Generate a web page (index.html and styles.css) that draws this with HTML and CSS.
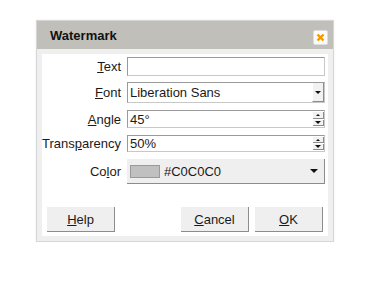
FILE: index.html
```html
<!DOCTYPE html>
<html>
<head>
    <meta charset="UTF-8">
    <title>Watermark</title>
    <link rel="stylesheet" href="styles.css">
</head>
<body>
    <div class="dialog">
        <div class="titlebar">
            <div class="title">Watermark</div>
            <div class="close-btn">
                <svg width="9" height="9" viewBox="0 0 9 9">
                    <path d="M1.5 1.5 L7.5 7.5 M7.5 1.5 L1.5 7.5" stroke="#f49a00" stroke-width="2.4"/>
                </svg>
            </div>
        </div>

        <div class="panel">
            <div class="form">
                <div class="row row-text">
                    <label><u>T</u>ext</label>
                    <div class="field"></div>
                </div>
                <div class="row row-font">
                    <label><u>F</u>ont</label>
                    <div class="field">
                        <span class="value">Liberation Sans</span>
                        <span class="drop-btn"><span class="tri"></span></span>
                    </div>
                </div>
                <div class="row row-angle">
                    <label><u>A</u>ngle</label>
                    <div class="field">
                        <span class="value">45°</span>
                        <span class="spin">
                            <span class="spin-btn"><span class="tri-up"></span></span>
                            <span class="spin-btn"><span class="tri-down"></span></span>
                        </span>
                    </div>
                </div>
                <div class="row row-trans">
                    <label>Trans<u>p</u>arency</label>
                    <div class="field">
                        <span class="value">50%</span>
                        <span class="spin">
                            <span class="spin-btn"><span class="tri-up"></span></span>
                            <span class="spin-btn"><span class="tri-down"></span></span>
                        </span>
                    </div>
                </div>
                <div class="row row-color">
                    <label>Co<u>l</u>or</label>
                    <div class="color-btn">
                        <span class="swatch"></span>
                        <span class="value">#C0C0C0</span>
                        <span class="tri big"></span>
                    </div>
                </div>
            </div>

            <div class="buttons">
                <button><u>H</u>elp</button>
                <div class="spacer"></div>
                <button><u>C</u>ancel</button>
                <button><u>O</u>K</button>
            </div>
        </div>
    </div>
</body>
</html>
```

FILE: styles.css
```css
:root {
    --title-bg: #c1bfba;
    --frame-bg: #efefef;
    --border-color: #a8a8a8;
    --text-color: #1a1a1a;
}

* {
    box-sizing: border-box;
    margin: 0;
    padding: 0;
}

body {
    background: #fff;
    font-family: "Liberation Sans", Arial, sans-serif;
    font-size: 13px;
    color: var(--text-color);
}

.dialog {
    margin: 20px 0 0 36px;
    width: 298px;
    height: 222px;
    background: var(--frame-bg);
    border: 1px solid #d6d6d6;
    box-shadow: 0 0 2px rgba(0,0,0,0.08);
    display: flex;
    flex-direction: column;
}

.titlebar {
    height: 28px;
    background: var(--title-bg);
    display: flex;
    align-items: center;
    justify-content: space-between;
    padding: 0 5px 0 13px;
}

.title {
    font-weight: bold;
    font-size: 13px;
    color: #111;
    padding-top: 1px;
}

.close-btn {
    width: 15px;
    height: 15px;
    margin-top: 5px;
    background: #fbfbfb;
    border: 1px solid #dedede;
    border-radius: 2px;
    display: flex;
    align-items: center;
    justify-content: center;
}

.panel {
    flex: 1;
    margin: 5px 5px 5px 5px;
    background: #fff;
    display: flex;
    flex-direction: column;
}

.form {
    padding: 3px 3px 0 0;
    display: flex;
    flex-direction: column;
}

.row {
    display: flex;
    align-items: center;
}

.row label {
    width: 79px;
    text-align: right;
    padding-right: 6px;
    width: 85px;
}

.row-text { height: 19px; }
.row-font { height: 21px; margin-top: 6px; }
.row-angle { height: 18px; margin-top: 7px; }
.row-trans { height: 17px; margin-top: 7px; }
.row-color { height: 25px; margin-top: 7px; }

.field {
    flex: 1;
    height: 100%;
    background: #fff;
    border: 1px solid #c8c8c8;
    border-top-color: #9a9a9a;
    border-left-color: #9a9a9a;
    display: flex;
    align-items: center;
    padding-left: 2px;
}

.value {
    flex: 1;
}

.drop-btn {
    width: 12px;
    height: 100%;
    background: #f2f2f2;
    border-right: 1px solid #8c8c8c;
    border-bottom: 1px solid #8c8c8c;
    border-left: 1px solid #fff;
    display: flex;
    align-items: center;
    justify-content: center;
    margin-right: 0;
}

.tri {
    width: 0;
    height: 0;
    border-left: 3px solid transparent;
    border-right: 3px solid transparent;
    border-top: 3px solid #111;
}

.tri.big {
    border-left-width: 4px;
    border-right-width: 4px;
    border-top-width: 4px;
    margin-right: 6px;
}

.spin {
    width: 11px;
    height: 100%;
    display: flex;
    flex-direction: column;
    gap: 1px;
    padding: 1px 0;
}

.spin-btn {
    flex: 1;
    background: #f2f2f2;
    border-right: 1px solid #8c8c8c;
    border-bottom: 1px solid #8c8c8c;
    display: flex;
    align-items: center;
    justify-content: center;
}

.tri-up {
    width: 0;
    height: 0;
    border-left: 2px solid transparent;
    border-right: 2px solid transparent;
    border-bottom: 2px solid #111;
}

.tri-down {
    width: 0;
    height: 0;
    border-left: 3px solid transparent;
    border-right: 3px solid transparent;
    border-top: 3px solid #111;
}

.color-btn {
    flex: 1;
    height: 100%;
    background: var(--frame-bg);
    border-right: 1px solid #8c8c8c;
    border-bottom: 1px solid #8c8c8c;
    display: flex;
    align-items: center;
    gap: 4px;
    padding-left: 3px;
}

.swatch {
    width: 30px;
    height: 13px;
    background: #c0c0c0;
    border: 1px solid #9a9a9a;
}

.buttons {
    margin-top: auto;
    padding: 0 5px 4px 5px;
    display: flex;
    gap: 6px;
}

.spacer {
    flex: 1;
}

button {
    width: 68px;
    height: 25px;
    font-family: "Liberation Sans", Arial, sans-serif;
    font-size: 13px;
    color: var(--text-color);
    background: var(--frame-bg);
    border: none;
    border-right: 1px solid #8c8c8c;
    border-bottom: 1px solid #8c8c8c;
}
```
